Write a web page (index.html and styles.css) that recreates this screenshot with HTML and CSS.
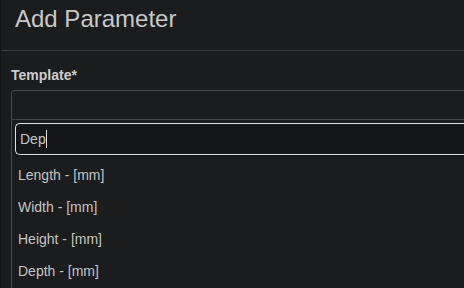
FILE: index.html
```html
<!DOCTYPE html>
<html>
<head>
<meta charset="utf-8">
<link rel="stylesheet" href="styles.css">
</head>
<body>
<div class="modal">
  <div class="header">
    <h1 class="title">Add Parameter</h1>
  </div>
  <div class="body">
    <div class="label">Template*</div>
    <div class="select">
      <div class="control"></div>
      <div class="menu">
        <div class="search"><span class="query">Dep</span><span class="caret"></span></div>
        <div class="option">Length - [mm]</div>
        <div class="option">Width - [mm]</div>
        <div class="option">Height - [mm]</div>
        <div class="option">Depth - [mm]</div>
      </div>
    </div>
  </div>
</div>
</body>
</html>
```

FILE: styles.css
```css
html, body {
  margin: 0;
  padding: 0;
  height: 100%;
  background: #1b1c1e;
  overflow: hidden;
}
body {
  font-family: "Liberation Sans", Arial, sans-serif;
}
.modal {
  height: 100%;
  border-left: 1px solid #131416;
  box-sizing: border-box;
  display: flex;
  flex-direction: column;
}
.header {
  height: 51px;
  flex: none;
  border-bottom: 1px solid #3b3c3e;
  padding: 7px 0 0 14px;
  box-sizing: border-box;
}
.title {
  margin: 0;
  font-size: 24px;
  line-height: 24px;
  font-weight: normal;
  color: #c8c8c8;
}
.body {
  flex: 1;
  min-height: 0;
  padding: 16px 0 0 10px;
  display: flex;
  flex-direction: column;
}
.label {
  font-size: 14px;
  line-height: 16px;
  font-weight: bold;
  color: #cdcdcd;
  margin-bottom: 7px;
}
.select {
  flex: 1;
  min-height: 0;
  border-left: 1px solid #48494b;
  border-top: 1px solid #4a4b4d;
  border-top-left-radius: 4px;
  display: flex;
  flex-direction: column;
}
.control {
  height: 28px;
  flex: none;
  border-bottom: 1px solid #45464a;
}
.menu {
  flex: 1;
  min-height: 0;
  overflow: hidden;
  padding: 3px 0 0 3px;
}
.search {
  height: 32px;
  box-sizing: border-box;
  border: 1px solid #e4e4e4;
  border-right: 0;
  border-radius: 5px 0 0 5px;
  background: #151618;
  padding-left: 4px;
  display: flex;
  align-items: center;
  font-size: 14px;
  color: #c6c6c6;
  box-shadow: 0 1px 2px rgba(0,0,0,0.6);
}
.caret {
  width: 1px;
  height: 18px;
  background: #e0e0e0;
}
.option {
  margin-left: -3px;
  padding-left: 6px;
  height: 32px;
  line-height: 32px;
  font-size: 14px;
  color: #c4c4c4;
}
.search + .option {
  margin-top: 4px;
}
```
